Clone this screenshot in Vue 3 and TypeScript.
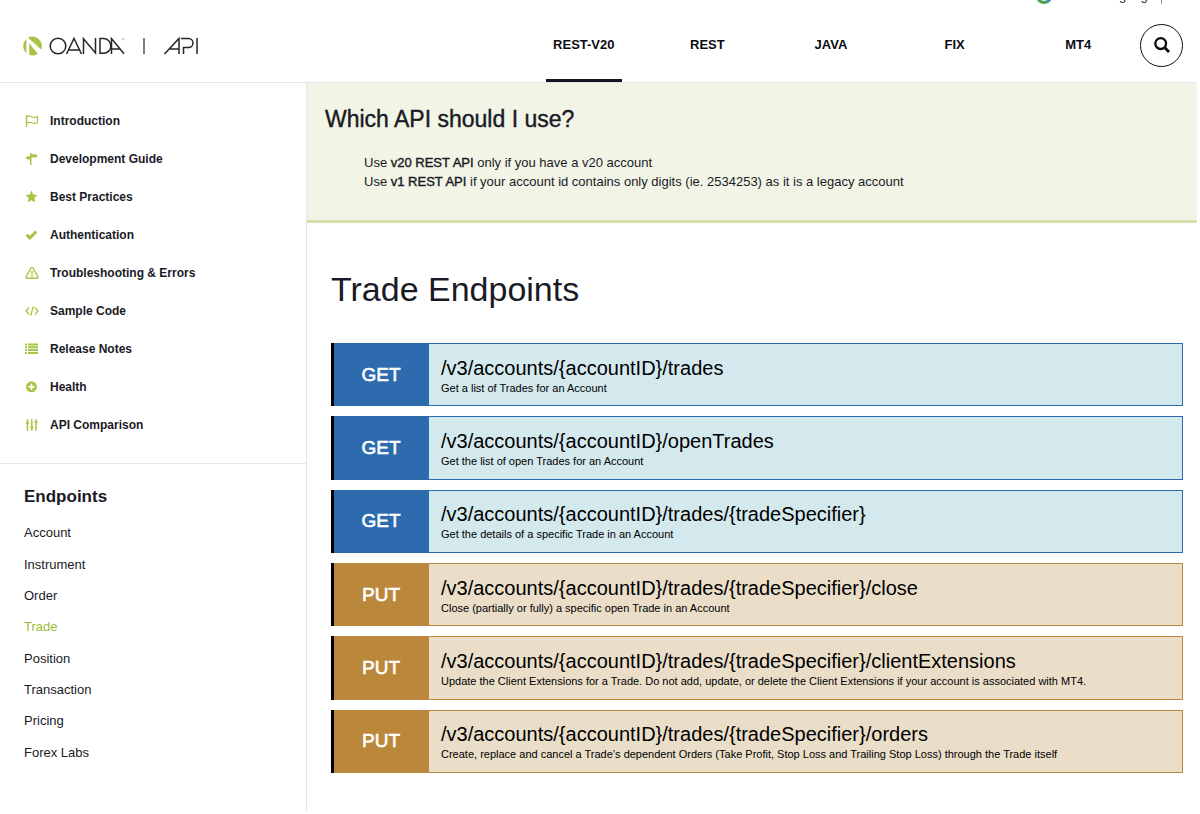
<script setup lang="ts">
interface SideLink { label: string; icon: string }
interface Endpoint { method: 'GET' | 'PUT'; path: string; text: string }

const tabs: string[] = ['REST-V20', 'REST', 'JAVA', 'FIX', 'MT4']
const activeTab = 'REST-V20'

const guides: SideLink[] = [
  { label: 'Introduction', icon: 'flag' },
  { label: 'Development Guide', icon: 'signpost' },
  { label: 'Best Practices', icon: 'star' },
  { label: 'Authentication', icon: 'check' },
  { label: 'Troubleshooting & Errors', icon: 'warning' },
  { label: 'Sample Code', icon: 'code' },
  { label: 'Release Notes', icon: 'list' },
  { label: 'Health', icon: 'plus' },
  { label: 'API Comparison', icon: 'sliders' },
]

const sections: string[] = ['Account', 'Instrument', 'Order', 'Trade', 'Position', 'Transaction', 'Pricing', 'Forex Labs']
const activeSection = 'Trade'

const endpoints: Endpoint[] = [
  { method: 'GET', path: '/v3/accounts/{accountID}/trades', text: 'Get a list of Trades for an Account' },
  { method: 'GET', path: '/v3/accounts/{accountID}/openTrades', text: 'Get the list of open Trades for an Account' },
  { method: 'GET', path: '/v3/accounts/{accountID}/trades/{tradeSpecifier}', text: 'Get the details of a specific Trade in an Account' },
  { method: 'PUT', path: '/v3/accounts/{accountID}/trades/{tradeSpecifier}/close', text: 'Close (partially or fully) a specific open Trade in an Account' },
  { method: 'PUT', path: '/v3/accounts/{accountID}/trades/{tradeSpecifier}/clientExtensions', text: 'Update the Client Extensions for a Trade. Do not add, update, or delete the Client Extensions if your account is associated with MT4.' },
  { method: 'PUT', path: '/v3/accounts/{accountID}/trades/{tradeSpecifier}/orders', text: 'Create, replace and cancel a Trade’s dependent Orders (Take Profit, Stop Loss and Trailing Stop Loss) through the Trade itself' },
]
</script>

<template>
  <div class="page">
    <header class="header">
      <div class="language">
        <svg class="language-mark" viewBox="0 0 16 16" aria-hidden="true">
          <circle cx="8" cy="8" r="8" fill="#4fa253" />
          <path d="M8 8L16 10A8 8 0 0 1 12.500 14.600z" fill="#4285f4" />
          <circle cx="8" cy="9" r="4" fill="#dfe9f5" />
        </svg>
        <a href="#language">Select Language</a>
        <span class="language-sep"></span>
        <span class="language-arrow">▼</span>
      </div>
      <a class="brand" href="#home" aria-label="OANDA API">
        <svg viewBox="0 0 176 20" width="176" height="20" fill="none" aria-hidden="true">
          <path d="M3.400 3A9.300 9.300 0 0 0 3.400 17z" fill="#a7c648" />
          <path d="M5 1.800A9.300 9.300 0 0 1 18.200 13.400z" fill="#a7c648" />
          <path d="M6.200 7.200L14.800 17.700A9.300 9.300 0 0 1 6.200 18.700z" fill="#a7c648" />
          <g stroke="#25252b" stroke-width="1.500">
            <circle cx="35" cy="10" r="7.800" />
            <path d="M43.500 18L51 2.500L58.500 18M46 14H56" />
            <path d="M60.500 18V2.800L72.500 17V2" />
            <path d="M77 2.500H80.500A7.400 7.400 0 0 1 80.500 17.300H77z" />
            <path d="M88.500 18V2.500L101 17.800M88.500 13H97" />
            <path d="M121 2V18" stroke-width="1.200" />
            <path d="M141.500 18L156 2.500V18M147 13H156" />
            <path d="M160.500 18V11.500H165.500A4.500 4.500 0 0 0 165.500 2.500H158M174 2V18" />
          </g>
          <circle cx="100" cy="3" r="1" stroke="#999" stroke-width=".5" />
        </svg>
      </a>
      <nav class="tabs" aria-label="API products">
        <a v-for="tab in tabs" :key="tab" :href="'#' + tab" :class="{ active: tab === activeTab }">
          <span>{{ tab }}</span>
        </a>
      </nav>
      <button class="search" type="button" aria-label="Search">
        <svg viewBox="0 0 16 16" width="16" height="16" fill="none" stroke="#0b0b12" aria-hidden="true">
          <circle cx="6.700" cy="6.600" r="5.400" stroke-width="2.300" />
          <path d="M10.600 10.600L15 15" stroke-width="2.800" />
        </svg>
      </button>
    </header>

    <div class="body">
      <aside class="sidebar">
        <nav class="guides" aria-label="Guides">
          <a v-for="item in guides" :key="item.label" :href="'#' + item.icon">
            <svg viewBox="0 0 14 14" width="14" height="14" fill="none" stroke="#a7c648" stroke-width="1.400" aria-hidden="true">
              <g v-if="item.icon === 'flag'">
                <path d="M1.500 1.200V13" />
                <path d="M1.500 2.800Q4 1.400 6.800 2.800T12.500 2.400V8.700Q9.800 10 6.800 8.800T1.500 9.200" stroke-width="1.200" />
              </g>
              <g v-else-if="item.icon === 'signpost'" fill="#a7c648" stroke="none">
                <path d="M5 1H6.500V13H5zM6.500 2.200H10.800L12.800 4L10.800 5.600H6.500zM5 4.300H2.400L.4 5.900L2.400 7.500H5z" />
              </g>
              <path v-else-if="item.icon === 'star'" d="M6.500 .6L8.300 4.400L12.500 4.900L9.400 7.900L10.200 12.200L6.500 10.200L2.800 12.200L3.600 7.900L.5 4.900L4.700 4.400z" fill="#a7c648" stroke="none" />
              <path v-else-if="item.icon === 'check'" d="M1.500 6.800L4.900 9.900L11.300 3.500" stroke-width="3" />
              <g v-else-if="item.icon === 'warning'">
                <path d="M6.100 2Q7 .8 7.900 2L12.800 10.600Q13.300 12.200 11.700 12.200H2.300Q.7 12.200 1.200 10.600z" />
                <path d="M7 4.700V8.300M7 9.300V10.800" stroke-width="1.600" />
              </g>
              <path v-else-if="item.icon === 'code'" d="M4.200 3.500L.9 7L4.200 10.500M9.800 3.500L13.100 7L9.800 10.500M8.200 2.300L5.800 11.700" stroke-width="1.300" />
              <path v-else-if="item.icon === 'list'" d="M0 2.500H2M3 2.500H13M0 5.300H2M3 5.300H13M0 8.100H2M3 8.100H13M0 10.900H2M3 10.900H13" stroke-width="2" />
              <g v-else-if="item.icon === 'plus'">
                <circle cx="6.500" cy="6.800" r="5.500" fill="#a7c648" stroke="none" />
                <path d="M6.500 3.800V9.800M3.500 6.800H9.500" stroke="#fff" stroke-width="1.700" />
              </g>
              <path v-else d="M2.500 1.200V12.800M6.800 1.200V12.800M11 1.200V12.800M.8 5H4.200M5.100 9.500H8.500M9.300 4H12.700" stroke-width="1.600" />
            </svg>
            <span>{{ item.label }}</span>
          </a>
        </nav>
        <section class="sections">
          <h2>Endpoints</h2>
          <nav aria-label="Endpoints">
            <a v-for="name in sections" :key="name" :href="'#' + name" :class="{ active: name === activeSection }">{{ name }}</a>
          </nav>
        </section>
      </aside>

      <main class="main">
        <section class="notice">
          <h2>Which API should I use?</h2>
          <p>Use <b>v20 REST API</b> only if you have a v20 account</p>
          <p>Use <b>v1 REST API</b> if your account id contains only digits (ie. 2534253) as it is a legacy account</p>
        </section>
        <section class="content">
          <h1>Trade Endpoints</h1>
          <div class="endpoints">
            <a v-for="item in endpoints" :key="item.path" class="endpoint" :class="item.method.toLowerCase()" :href="'#' + item.path">
              <span class="method">{{ item.method }}</span>
              <span class="detail">
                <span class="path">{{ item.path }}</span>
                <span class="text">{{ item.text }}</span>
              </span>
            </a>
          </div>
        </section>
      </main>
    </div>
  </div>
</template>

<style>
body {
  margin: 0;
  background: #fff;
}
</style>

<style scoped>
.page {
  font-family: "Liberation Sans", Arial, sans-serif;
  color: #1a1a26;
  padding-right: 3px;
}
a {
  color: inherit;
  text-decoration: none;
}
h1,
h2,
p {
  margin: 0;
}
.header {
  position: relative;
  display: flex;
  align-items: center;
  height: 82px;
  border-bottom: 1px solid #e6e6e6;
  padding: 0 14px 0 23px;
  overflow: hidden;
}
.language {
  position: absolute;
  top: -12px;
  right: 19px;
  display: flex;
  align-items: center;
  gap: 6px;
  height: 16px;
  font-size: 13px;
  line-height: 16px;
  color: #222;
}
.language-mark {
  width: 16px;
  height: 16px;
}
.language-sep {
  width: 1px;
  height: 16px;
  background: #999;
}
.language-arrow {
  font-size: 10px;
  color: #777;
}
.brand {
  display: flex;
  padding-top: 10px;
}
.tabs {
  display: grid;
  grid-template-columns: repeat(5, 1fr);
  align-self: stretch;
  flex: 0 0 618px;
  margin-left: auto;
}
.tabs a {
  display: flex;
  justify-content: center;
  font-size: 13px;
  font-weight: bold;
  line-height: 16px;
  color: #0b0b12;
}
.tabs span {
  box-sizing: border-box;
  height: 82px;
  padding: 37px 7px 0;
  border-bottom: 3px solid transparent;
}
.tabs .active span {
  border-color: #14141f;
}
.search {
  display: flex;
  align-items: center;
  justify-content: center;
  width: 43px;
  height: 43px;
  margin-top: 8px;
  padding: 0;
  border: 1px solid #0b0b12;
  border-radius: 50%;
  background: #fff;
}
.body {
  display: flex;
}
.sidebar {
  flex: 0 0 306px;
  border-right: 1px solid #e6e6e6;
  padding-bottom: 43px;
}
.guides {
  padding: 19px 25px;
  border-bottom: 1px solid #e6e6e6;
}
.guides a {
  display: flex;
  align-items: center;
  gap: 11px;
  height: 38px;
  font-size: 12px;
  font-weight: bold;
}
.sections {
  padding: 23px 24px 0;
}
.sections h2 {
  font-size: 17px;
  line-height: 20px;
}
.sections nav {
  display: grid;
  grid-auto-rows: 1fr;
  min-height: 251px;
  margin-top: 10px;
}
.sections nav a {
  display: flex;
  align-items: center;
  font-size: 13px;
}
.sections .active {
  color: #9dbd33;
}
.main {
  flex: 1;
  min-width: 0;
}
.notice {
  padding: 21px 18px 29px;
  border-bottom: 3px solid #d5dfa6;
  background: #f2f4e6;
}
.notice h2 {
  margin-bottom: 19px;
  font-size: 23px;
  font-weight: normal;
  line-height: 30px;
  -webkit-text-stroke: 0.4px currentColor;
}
.notice p {
  padding-left: 39px;
  font-size: 13px;
  line-height: 19px;
}
.notice b {
  font-weight: normal;
  -webkit-text-stroke: 0.4px currentColor;
}
.content {
  padding: 45px 14px 0 24px;
}
.content h1 {
  font-size: 34px;
  font-weight: normal;
  line-height: 42px;
}
.endpoints {
  display: grid;
  grid-auto-rows: 1fr;
  gap: 10px;
  min-height: 430px;
  margin-top: 33px;
}
.endpoint {
  display: flex;
  color: #000;
}
.method {
  display: flex;
  align-items: center;
  justify-content: center;
  flex: 0 0 94px;
  border-left: 3px solid #000;
  font-size: 19px;
  color: #fff;
  -webkit-text-stroke: 0.6px currentColor;
}
.detail {
  display: flex;
  flex: 1;
  flex-direction: column;
  justify-content: center;
  padding: 3px 12px 0;
  border: 1px solid;
}
.path {
  font-size: 20px;
  line-height: 24px;
}
.text {
  font-size: 11px;
  line-height: 17px;
}
.get .method {
  background: #2d6aae;
}
.get .detail {
  border-color: #2d6aae;
  background: #d4e9ee;
}
.put .method {
  background: #bb883b;
}
.put .detail {
  border-color: #bb883b;
  background: #eadec9;
}
</style>
